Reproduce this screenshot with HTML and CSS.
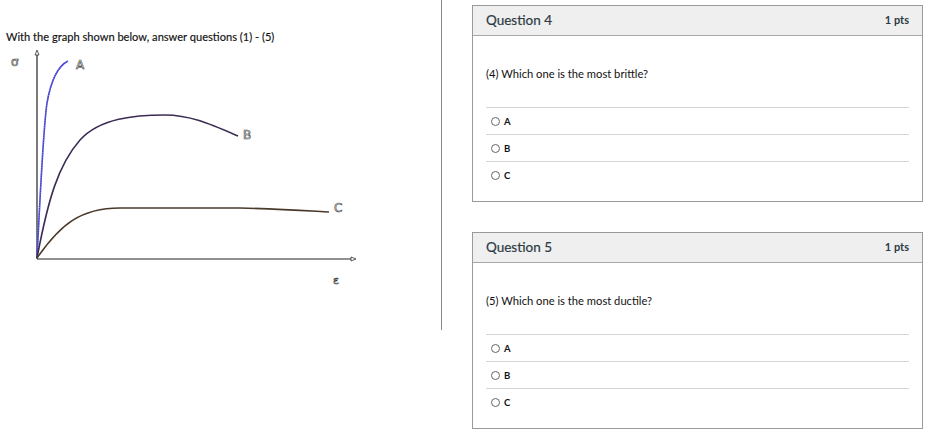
FILE: index.html
```html
<!DOCTYPE html>
<html>
<head>
<meta charset="utf-8">
<link rel="stylesheet" href="styles.css">
</head>
<body>
<div class="page">
  <div class="left">
    <p class="intro">With the graph shown below, answer questions (1) - (5)</p>
    <svg class="graph" width="441" height="286" viewBox="0 44 441 286" xmlns="http://www.w3.org/2000/svg">
      <!-- axes -->
      <line x1="37" y1="259" x2="37" y2="52" stroke="#222" stroke-width="1.2"/>
      <path d="M35 55 L37 50 L39 55 Z" fill="#fff" stroke="#333" stroke-width="0.8"/>
      <line x1="37" y1="259" x2="352" y2="259" stroke="#222" stroke-width="1.2"/>
      <path d="M351 257 L356 259 L351 261 Z" fill="#fff" stroke="#333" stroke-width="0.8"/>
      <!-- curve A -->
      <path d="M37 258 C40 200 43 130 47 103 C51 80 58 66 68 61" fill="none" stroke="#3a3ad0" stroke-width="1.6"/>
      <path d="M37 258 C40 200 43 130 47 103 C51 80 58 66 68 61" fill="none" stroke="#c8c8f0" stroke-width="0.5" stroke-dasharray="1 1.5"/>
      <!-- curve B -->
      <path d="M37 258 C48 200 58 165 80 140 C100 118 135 115 165 115 C190 115 210 124 238 136" fill="none" stroke="#3c2c55" stroke-width="1.6"/>
      <!-- curve C -->
      <path d="M37 258 C60 225 80 208 120 208 L240 208 C280 209 310 211 329 212" fill="none" stroke="#4a3a2a" stroke-width="1.6"/>
      <!-- labels -->
      <text x="11" y="66" class="lbl">σ</text>
      <text x="76" y="69" class="lbl">A</text>
      <text x="243" y="139" class="lbl">B</text>
      <text x="334" y="212" class="lbl">C</text>
      <text x="333" y="284" class="lbl small">ε</text>
    </svg>
  </div>
  <div class="right">
    <div class="card">
      <div class="card-head">
        <span class="q-title">Question 4</span>
        <span class="pts">1 pts</span>
      </div>
      <div class="card-body">
        <p class="q-text">(4) Which one is the most brittle?</p>
        <ul class="answers">
          <li><span class="radio"></span><span class="opt">A</span></li>
          <li><span class="radio"></span><span class="opt">B</span></li>
          <li><span class="radio"></span><span class="opt">C</span></li>
        </ul>
      </div>
    </div>
    <div class="card">
      <div class="card-head">
        <span class="q-title">Question 5</span>
        <span class="pts">1 pts</span>
      </div>
      <div class="card-body">
        <p class="q-text">(5) Which one is the most ductile?</p>
        <ul class="answers">
          <li><span class="radio"></span><span class="opt">A</span></li>
          <li><span class="radio"></span><span class="opt">B</span></li>
          <li><span class="radio"></span><span class="opt">C</span></li>
        </ul>
      </div>
    </div>
  </div>
</div>
</body>
</html>
```
FILE: styles.css
```css
html, body {
  margin: 0;
  padding: 0;
  background: #fff;
}
body {
  font-family: Lato, "Open Sans", "Liberation Sans", sans-serif;
  color: #2d3b45;
}
.page {
  display: flex;
  align-items: flex-start;
  width: 929px;
  height: 434px;
}
.left {
  width: 441px;
  height: 330px;
  border-right: 1px solid #8a8a8a;
  flex-shrink: 0;
}
.intro {
  margin: 0;
  padding: 30px 0 0 6px;
  font-size: 11.1px;
  line-height: 14px;
  height: 14px;
  color: #111;
  -webkit-text-stroke: 0.15px #111;
}
.graph {
  display: block;
}
.lbl {
  font-family: "DejaVu Sans", sans-serif;
  font-size: 12px;
  fill: #fff;
  stroke: #333;
  stroke-width: 0.6;
}
.lbl.small {
  font-size: 11px;
}
.right {
  padding: 5px 0 0 30px;
  display: flex;
  flex-direction: column;
  gap: 30px;
}
.card {
  width: 449px;
  height: 195px;
  border: 1px solid #9a9a9a;
  display: flex;
  flex-direction: column;
}
.card-head {
  height: 30px;
  background: #efefef;
  border-bottom: 1px solid #a8a8a8;
  display: flex;
  align-items: center;
  justify-content: space-between;
  padding: 0 13px 2px 13px;
  box-sizing: border-box;
}
.q-title {
  font-size: 13.5px;
  color: #2d3b45;
  -webkit-text-stroke: 0.2px #2d3b45;
}
.pts {
  font-size: 11px;
  font-weight: 700;
  color: #2d3b45;
}
.card-body {
  padding: 31px 13px 0 13px;
}
.q-text {
  margin: 0;
  font-size: 11.2px;
  line-height: 14px;
  color: #111;
}
.answers {
  list-style: none;
  margin: 26px 0 0 0;
  padding: 0;
}
.answers li {
  border-top: 1px solid #d4d4d4;
  height: 26px;
  display: flex;
  align-items: center;
  padding-left: 5px;
  gap: 4px;
}
.radio {
  width: 7px;
  height: 7px;
  border: 1px solid #666;
  border-radius: 50%;
  box-sizing: content-box;
}
.opt {
  font-size: 9.5px;
  font-weight: 700;
  color: #111;
}
```
